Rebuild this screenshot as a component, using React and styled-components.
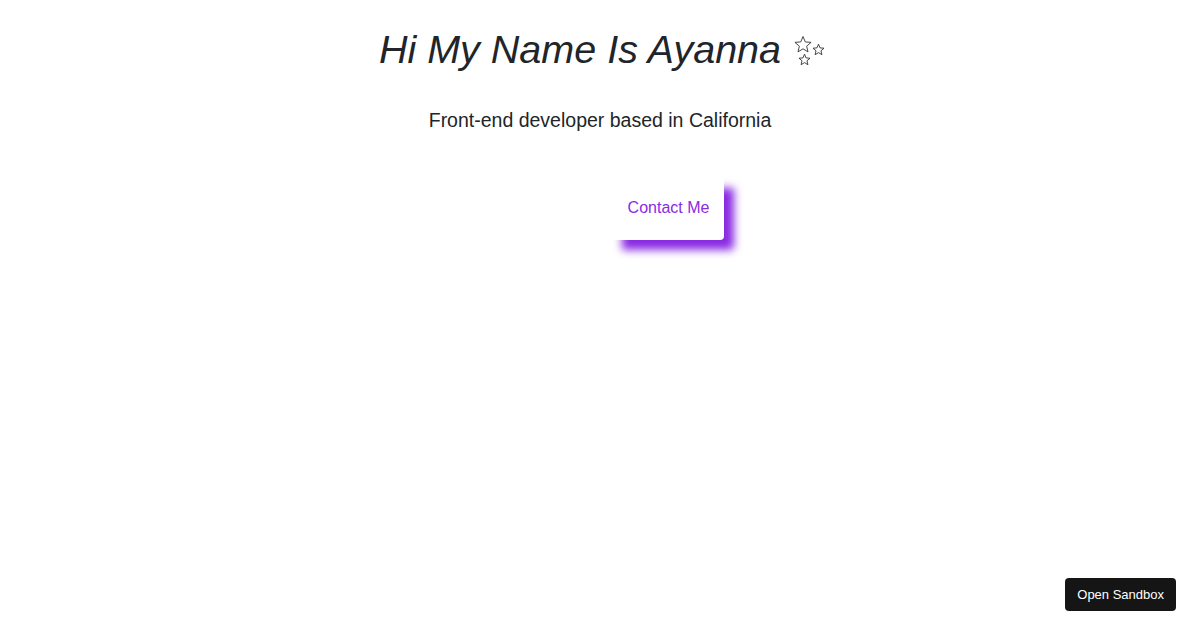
import React from 'react';
import styled, { createGlobalStyle } from 'styled-components';

const GlobalStyle = createGlobalStyle`
  html, body {
    margin: 0;
    padding: 0;
    background: #fff;
  }
  body {
    font-family: "Liberation Sans", Arial, sans-serif;
    color: #212529;
  }
`;

const Page = styled.div`
  width: 1200px;
  height: 630px;
  display: flex;
  flex-direction: column;
  align-items: center;
  position: relative;
`;

const Title = styled.h1`
  display: flex;
  align-items: center;
  gap: 12px;
  margin: 22px 0 0;
  padding-left: 6px;
  font-size: 39.5px;
  font-weight: 400;
  font-style: italic;
  line-height: 54px;
  color: #212529;
`;

const Subtitle = styled.p`
  margin: 32px 0 0;
  font-size: 19.5px;
  line-height: 24px;
  color: #212529;
`;

const ButtonRow = styled.div`
  margin-top: 46px;
  padding-left: 136px;
`;

const ContactButton = styled.button`
  border: none;
  background: #fff;
  color: #8a2be2;
  font-family: "Liberation Sans", Arial, sans-serif;
  font-size: 16px;
  white-space: nowrap;
  padding: 0 15px 2px 16px;
  height: 62px;
  border-radius: 0 0 4px 0;
  box-shadow: 10px 10px 8px #8a2be2;
  cursor: pointer;
`;

const SandboxButton = styled.button`
  position: absolute;
  right: 24px;
  bottom: 19px;
  height: 33px;
  padding: 0 12px;
  border: none;
  border-radius: 4px;
  background: #151515;
  color: #fff;
  font-family: "Liberation Sans", Arial, sans-serif;
  font-size: 13px;
  cursor: pointer;
`;

const star = (cx, cy, r) => {
  const pts = [];
  for (let i = 0; i < 10; i++) {
    const a = -Math.PI / 2 + (i * Math.PI) / 5;
    const rr = i % 2 === 0 ? r : r * 0.45;
    pts.push(`${(cx + rr * Math.cos(a)).toFixed(2)},${(cy + rr * Math.sin(a)).toFixed(2)}`);
  }
  return pts.join(' ');
};

const SparklesIcon = () => (
  <svg width="34" height="34" viewBox="0 0 34 34" style={{ marginTop: 6 }}>
    <g fill="none" stroke="#333" strokeWidth="0.9" strokeLinejoin="miter">
      <polygon points={star(10, 10, 8.5)} />
      <polygon points={star(25.5, 15, 5.8)} />
      <polygon points={star(11.5, 25, 5.8)} />
    </g>
  </svg>
);

export default function App() {
  return (
    <Page>
      <GlobalStyle />
      <Title>
        Hi My Name Is Ayanna
        <SparklesIcon />
      </Title>
      <Subtitle>Front-end developer based in California</Subtitle>
      <ButtonRow>
        <ContactButton>Contact Me</ContactButton>
      </ButtonRow>
      <SandboxButton>Open Sandbox</SandboxButton>
    </Page>
  );
}
